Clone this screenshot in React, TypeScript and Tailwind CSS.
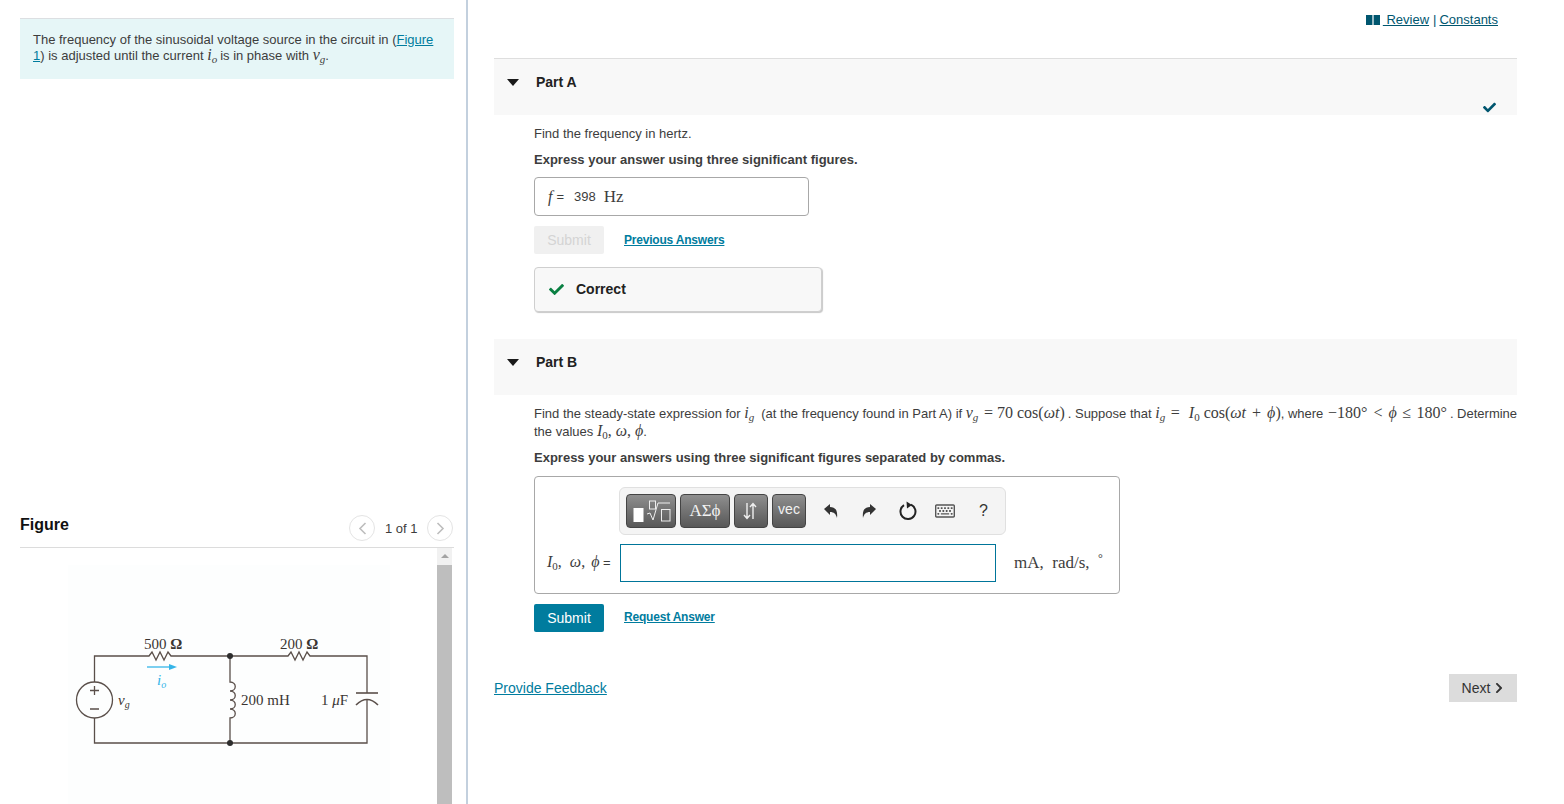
import { FaCheck, FaChevronRight, FaRegKeyboard } from "react-icons/fa";

const serif = "font-['Liberation_Serif',serif]";

function M({ children }: { children: React.ReactNode }) {
  return <span className={`${serif} italic text-[16px] font-medium leading-[0]`}>{children}</span>;
}

function R({ children }: { children: React.ReactNode }) {
  return <span className={`${serif} text-[16px] leading-[0]`}>{children}</span>;
}

function Sub({ children }: { children: React.ReactNode }) {
  return <sub className={`${serif} italic text-[11px] leading-none`}>{children}</sub>;
}

function PartHeader({ label }: { label: string }) {
  return (
    <div className="flex h-[56px] items-start bg-[#f8f8f8] pt-[14px]">
      <span className="ml-[13px] mt-[6px] h-0 w-0 border-x-[6px] border-t-[7px] border-x-transparent border-t-[#1a1a1a]" />
      <span className="ml-[17px] text-[14px] font-bold leading-[18px] text-[#212121]">{label}</span>
    </div>
  );
}

function Circuit() {
  const wire = "#5a4f4a";
  return (
    <svg width="322" height="140" viewBox="8 0 322 140" className="block">
      <g fill="none" stroke={wire} strokeWidth="1.3">
        <path d="M34.5 62V36H89l3-4 4 8 4-8 4 8 4-8 3 4H228l3-4 4 8 4-8 4 8 4-8 3 4h57v37" />
        <path d="M307 80V123H34.5V98" />
        <path d="M170 36V62c7 0 7 9 0 9 7 0 7 9 0 9 7 0 7 9 0 9 7 0 7 9 0 9V123" />
        <circle cx="34.5" cy="80" r="18" />
        <path d="M30 70.5h9M34.5 66v9M30 89h9" />
      </g>
      <path d="M296 73h22" stroke={wire} strokeWidth="1.6" />
      <path d="M296 85q11-11 22 0" stroke={wire} strokeWidth="1.6" fill="none" />
      <circle cx="170" cy="36" r="3" fill="#2d2d2d" />
      <circle cx="170" cy="123" r="3" fill="#2d2d2d" />
      <path d="M87 47h24" stroke="#35b5e8" strokeWidth="1.3" />
      <path d="M117 47l-8-3v6z" fill="#35b5e8" />
      <g fontFamily="'Liberation Serif',serif" fontSize="15" fill="#3a3532">
        <text x="84" y="29">500 <tspan fontWeight="bold">Ω</tspan></text>
        <text x="220" y="29">200 <tspan fontWeight="bold">Ω</tspan></text>
        <text x="181" y="85">200 mH</text>
        <text x="261" y="85">1 <tspan fontStyle="italic">μ</tspan>F</text>
        <text x="58" y="85" fontStyle="italic">v<tspan fontSize="10" dy="3">g</tspan></text>
        <text x="97" y="65" fontStyle="italic" fill="#35b5e8">i<tspan fontSize="10" dy="3">o</tspan></text>
      </g>
    </svg>
  );
}

function ToolBtn({ className, children }: { className: string; children: React.ReactNode }) {
  return (
    <div className={`flex h-[34px] items-center justify-center rounded-[4px] border border-[#444] bg-gradient-to-b from-[#8f8f8f] to-[#585858] text-[#f2f2f2] ${className}`}>
      {children}
    </div>
  );
}

function ArrowIcon({ flip }: { flip?: boolean }) {
  return (
    <svg width="14" height="16" viewBox="0 0 14 16" className={flip ? "-scale-x-100" : ""}>
      <path d="M0 6 6 1v3c5 0 8 3 7 11-1-4-3-6-7-6v3z" fill="#333" />
    </svg>
  );
}

export default function App() {
  return (
    <div className="flex h-[804px] w-[1564px] overflow-hidden bg-white font-['Liberation_Sans',Arial,sans-serif] text-[13px] text-[#3d3d3d]">
      {/* left column */}
      <div className="flex w-[468px] shrink-0 flex-col border-r-2 border-[#c3d0de] pl-[20px] pr-[12px]">
        <div className="mt-[18px] h-[61px] border-t border-[#dcdfe2] bg-[#e6f6f7] px-[13px] pt-[13px] leading-[16px]">
          The frequency of the sinusoidal voltage source in the circuit in (
          <span className="text-[#007c9e] underline">Figure 1</span>) is adjusted until the current{" "}
          <M>i<Sub>o</Sub></M><span className="ml-[3px]">is in phase with</span> <M>v<Sub>g</Sub></M>.
        </div>
        <div className="mt-[436px] flex h-[33px] items-start justify-between border-b border-[#dcdcdc]">
          <span className="text-[16px] font-bold leading-[20px] text-[#111]">Figure</span>
          <div className="mr-[1px] flex items-center">
            <span className="flex h-[26px] w-[26px] items-center justify-center rounded-full border border-[#e4e4e4] text-[#bdbdbd]">
              <svg width="9" height="13" viewBox="0 0 9 13"><path d="M7.5 1 2 6.5 7.5 12" fill="none" stroke="currentColor" strokeWidth="1.6" /></svg>
            </span>
            <span className="mx-[10px] mt-[2px] w-[32px] whitespace-nowrap">1 of 1</span>
            <span className="flex h-[26px] w-[26px] items-center justify-center rounded-full border border-[#e4e4e4] text-[#bdbdbd]">
              <svg width="9" height="13" viewBox="0 0 9 13"><path d="M1.5 1 7 6.5 1.5 12" fill="none" stroke="currentColor" strokeWidth="1.6" /></svg>
            </span>
          </div>
        </div>
        <div className="flex min-h-0 flex-1">
          <div className="flex flex-1 flex-col pl-[48px] pt-[17px]">
            <div className="w-[322px] flex-1 bg-[#fdfefe] pt-[55px]">
              <Circuit />
            </div>
          </div>
          <div className="mr-[2px] flex w-[15px] flex-col items-center bg-[#f1f1f1]">
            <span className="mt-[6px] h-0 w-0 border-x-[4px] border-b-[4px] border-x-transparent border-b-[#a3a3a3]" />
            <div className="mt-[7px] w-full flex-1 bg-[#bebebe]" />
          </div>
        </div>
      </div>

      {/* right column */}
      <div className="flex w-[1049px] shrink-0 flex-col pl-[26px]">
        <div className="flex h-[39px] items-center justify-end pr-[19px] text-[#00566f]">
          <svg width="14" height="10" viewBox="0 0 14 10" className="mr-[3px]"><path d="M0 0h6.4v10H0zM7.6 0H14v10H7.6z" fill="#00566f" /></svg>
          <span className="whitespace-pre underline"> Review</span>
          <span className="ml-[4px] mr-[3px]">|</span>
          <span className="underline">Constants</span>
        </div>
        <div className="mt-[19px] border-t border-[#dedede]">
          <div className="relative">
            <PartHeader label="Part A" />
            <FaCheck className="absolute bottom-[1px] right-[21px] text-[13px] text-[#00566f]" />
          </div>
        </div>
        <div className="pl-[40px]">
          <p className="mt-[10px] leading-[18px]">Find the frequency in hertz.</p>
          <p className="mt-[8px] font-bold leading-[18px]">Express your answer using three significant figures.</p>
          <div className="mt-[8px] flex h-[39px] w-[275px] items-center rounded-[4px] border border-[#a8a8a8] pl-[13px]">
            <M>f</M>
            <span className="ml-[4px]">=</span>
            <span className="ml-[10px]">398</span>
            <span className={`${serif} ml-[8px] text-[17px]`}>Hz</span>
          </div>
          <div className="mt-[10px] flex items-center">
            <div className="flex h-[28px] w-[70px] items-center justify-center rounded-[2px] bg-[#f0f0f0] text-[14px] text-[#d4d4d4]">Submit</div>
            <span className="ml-[20px] text-[12px] font-bold tracking-[-0.2px] text-[#007c9e] underline">Previous Answers</span>
          </div>
          <div className="mt-[13px] flex h-[45px] w-[288px] items-center rounded-[4px] border border-[#cfcfcf] bg-[#f8f8f8] pl-[14px] shadow-[1px_1px_1px_#c8c8c8]">
            <FaCheck className="text-[15px] text-[#0a8043]" />
            <span className="ml-[12px] text-[14px] font-bold text-[#212121]">Correct</span>
          </div>
        </div>
        <div className="mt-[27px]">
          <PartHeader label="Part B" />
        </div>
        <div className="pl-[40px]">
          <p className="mt-[10px] h-[36px] whitespace-nowrap leading-[18px]">
            Find the steady-state expression for <M>i<Sub>g</Sub></M>
            <span className="ml-[7px]">(at the frequency found in Part A) if</span>{" "}
            <M>v<Sub>g</Sub></M> <R><span className="ml-[2px]">= 70 cos(<i>ωt</i>)</span></R>
            <span className="ml-[3px]">. Suppose that</span> <M>i<Sub>g</Sub></M>{" "}
            <R>
              <span className="ml-[2px] mr-[9px]">=</span>
              <i>I</i><sub className="text-[11px]">0</sub> cos(<i>ωt</i>
              <span className="mx-[2px]"> + </span>
              <i>ϕ</i>)
            </R>
            , where{" "}
            <R>
              <span className="ml-[1px]">−180°</span><span className="mx-[2px]"> &lt; </span><i>ϕ</i><span className="mx-[1.5px]"> ≤ </span>180°
            </R>
            <span className="ml-[3px]">. Determine</span>
            <br />
            the values <R><i>I</i><sub className="text-[11px]">0</sub>, <i>ω</i>, <i>ϕ</i></R>.
          </p>
          <p className="mt-[8px] font-bold leading-[18px]">Express your answers using three significant figures separated by commas.</p>
          <div className="mt-[9px] h-[118px] w-[586px] rounded-[4px] border border-[#a8a8a8] pt-[10px]">
            <div className="ml-[84px] flex h-[48px] w-[387px] items-center rounded-[6px] border border-[#e0e0e0] bg-[#f4f4f4] pl-[6px]">
              <ToolBtn className="w-[50px]">
                <svg width="44" height="30" viewBox="0 0 44 30">
                  <rect x="4.5" y="12" width="10" height="14" fill="#fff" />
                  <rect x="20.5" y="5" width="6" height="8" fill="none" stroke="#eee" />
                  <path d="M18 18l3-1 3 7 5-17h12" fill="none" stroke="#eee" />
                  <rect x="32.5" y="13.5" width="8.5" height="11.5" fill="none" stroke="#eee" />
                </svg>
              </ToolBtn>
              <ToolBtn className={`ml-[4px] w-[50px] ${serif} text-[17px]`}>ΑΣϕ</ToolBtn>
              <ToolBtn className="ml-[4px] w-[34px]">
                <svg width="18" height="18" viewBox="0 0 18 18">
                  <path d="M5 1v15M2 13l3 3.5L8 13M11 17V2M8 5l3-3.5L14 5" fill="none" stroke="#eee" strokeWidth="1.4" />
                </svg>
              </ToolBtn>
              <ToolBtn className="ml-[4px] w-[34px] pb-[3px] text-[14px]">vec</ToolBtn>
              <span className="ml-[18px] flex w-[14px]"><ArrowIcon /></span>
              <span className="ml-[24px] flex w-[14px]"><ArrowIcon flip /></span>
              <svg width="20" height="20" viewBox="0 0 20 20" className="ml-[22px]">
                <path d="M6 4.2A7.5 7.5 0 1 0 13 3.7" fill="none" stroke="#222" strokeWidth="2" />
                <path d="M8.5 0.5 14 4 9 7.5z" fill="#222" />
              </svg>
              <FaRegKeyboard className="ml-[17px] text-[20px] text-[#555]" />
              <span className="ml-[24px] text-[16px] text-[#333]">?</span>
            </div>
            <div className="mt-[9px] flex items-center">
              <span className="ml-[12px] w-[73px] whitespace-nowrap">
                <R><i>I</i><sub className="text-[11px]">0</sub>, &nbsp;<i>ω</i>, <i className="ml-[2px]">ϕ</i></R> <span>=</span>
              </span>
              <div className="h-[38px] w-[376px] border border-[#00759a]" />
              <span className={`${serif} ml-[18px] whitespace-nowrap text-[17px]`}>mA, &nbsp;rad/s, &nbsp;<sup className="text-[12px]">°</sup></span>
            </div>
          </div>
          <div className="mt-[10px] flex items-center">
            <div className="flex h-[28px] w-[70px] items-center justify-center rounded-[2px] bg-[#007c9e] text-[14px] text-white">Submit</div>
            <span className="ml-[20px] -mt-[2px] text-[12px] font-bold tracking-[-0.2px] text-[#007c9e] underline">Request Answer</span>
          </div>
        </div>
        <div className="mt-[42px] flex items-center justify-between">
          <span className="text-[14px] text-[#007c9e] underline">Provide Feedback</span>
          <div className="flex h-[28px] w-[68px] items-center justify-center gap-[3px] bg-[#dcdcdc] pl-[1px] text-[14px] text-[#333]">
            Next <FaChevronRight className="text-[12px]" />
          </div>
        </div>
      </div>
    </div>
  );
}
